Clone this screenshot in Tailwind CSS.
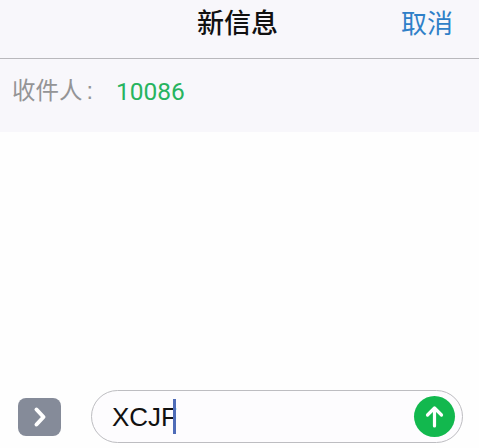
<!DOCTYPE html>
<html lang="zh">
<head>
<meta charset="utf-8">
<script src="https://cdn.jsdelivr.net/npm/@tailwindcss/browser@4"></script>
</head>
<body class="bg-[#fefefe] font-['Liberation_Sans','Noto_Sans_CJK_SC',sans-serif]">
<div class="w-[479px] h-[448px] flex flex-col overflow-hidden">
    <!-- header -->
    <div class="h-[59px] shrink-0 bg-[#f8f7fb] border-b border-[#b9b8bc] flex items-center justify-between pl-[197px] pr-[26px] pb-[10px]">
        <span class="text-[27px] leading-none font-medium text-[#111111]">新信息</span>
        <span class="text-[26px] leading-none text-[#2f80c8]">取消</span>
    </div>
    <!-- recipient -->
    <div class="h-[73px] shrink-0 bg-[#f8f7fb] flex items-center pl-[12px] pb-[7px]">
        <span class="text-[23.5px] leading-none text-[#949496] w-[104px]">收件人<span class="ml-[4px]">:</span></span>
        <span class="text-[24.5px] leading-none text-[#27b45f] font-['Roboto',sans-serif]">10086</span>
    </div>
    <div class="flex-1"></div>
    <!-- input bar -->
    <div class="h-[53px] shrink-0 mb-[5px] flex items-center pl-[18px] pr-[16px]">
        <div class="w-[43px] h-[38px] mr-[30px] mt-[1px] rounded-[8px] bg-[#858b99] flex items-center justify-center">
            <svg class="w-[16px] h-[22px]" viewBox="0 0 16 22" fill="none" stroke="#ffffff" stroke-width="4" stroke-linecap="round" stroke-linejoin="round"><path d="M4.5 3.5 L11.5 11 L4.5 18.5"/></svg>
        </div>
        <div class="flex-1 h-[53px] rounded-[27px] border border-[#bdbdc1] bg-[#fdfcfe] flex items-center justify-between pl-[20px] pr-[7px]">
            <div class="flex items-center">
                <span class="text-[26px] leading-none text-[#111111]">XCJF</span>
                <span class="w-[3px] h-[35px] -ml-[4px] bg-[#4f6cb8]"></span>
            </div>
            <div class="w-[41px] h-[41px] rounded-full bg-[#12b84e] flex items-center justify-center">
                <svg class="w-[21px] h-[23px]" viewBox="0 0 21 23" fill="none" stroke="#ffffff" stroke-width="3.2" stroke-linecap="round" stroke-linejoin="round"><path d="M10.5 21 V3 M3.5 10 L10.5 3 L17.5 10"/></svg>
            </div>
        </div>
    </div>
</div>
</body>
</html>
